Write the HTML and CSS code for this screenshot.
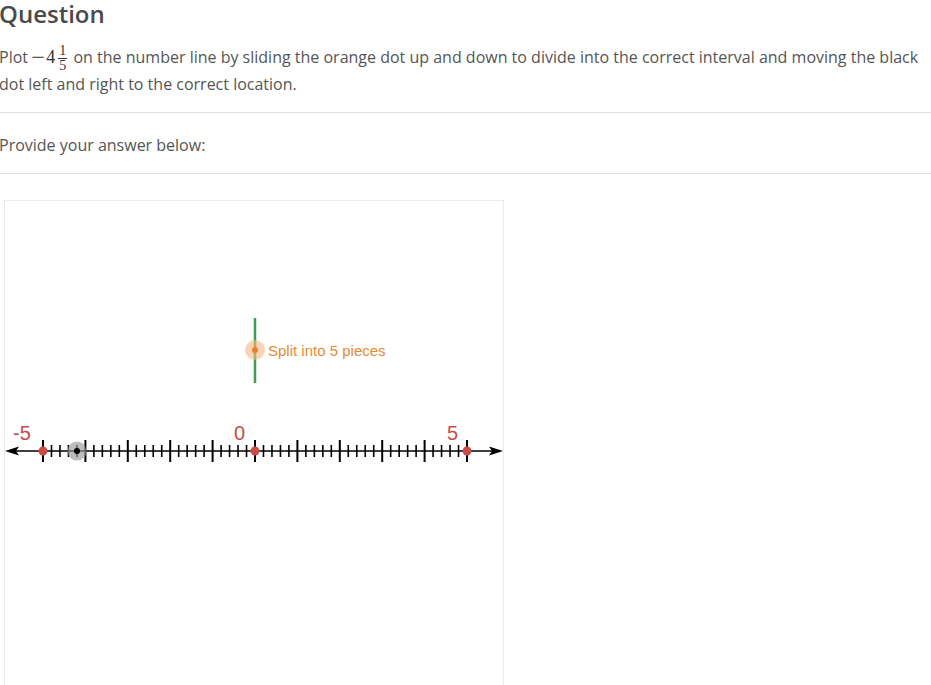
FILE: index.html
```html
<!DOCTYPE html>
<html>
<head>
    <title>Question</title>
    <link rel="stylesheet" href="styles.css">
</head>
<body>
    <div class="page">
        <h2 class="title">Question</h2>
        <p class="prompt">Plot <span class="math"><span class="minus">&minus;</span>4<span class="frac"><span class="num">1</span><span class="den">5</span></span></span> on the number line by sliding the orange dot up and down to divide into the correct interval and moving the black dot left and right to the correct location.</p>
        <hr class="rule">
        <p class="provide">Provide your answer below:</p>
        <hr class="rule">

        <div class="board">
            <svg id="plot" class="plot" width="498" height="520" viewBox="5 201 498 520">
                <!-- split slider -->
                <line x1="255" y1="318" x2="255" y2="383" stroke="#3f9a52" stroke-width="2.5"/>
                <circle cx="255" cy="350" r="10" fill="#f6b886" fill-opacity="0.6"/>
                <circle cx="255" cy="350" r="3" fill="#ec7f2a"/>
                <text class="split-label" x="268" y="356">Split into 5 pieces</text>

                <!-- axis -->
                <line x1="12" y1="451" x2="496" y2="451" stroke="#000" stroke-width="1.5"/>
                <polygon points="5,451 19,446.5 16,451 19,455.5" fill="#000"/>
                <polygon points="503,451 489,446.5 492,451 489,455.5" fill="#000"/>
                <g id="ticks"></g>

                <text class="axis-label" x="13" y="440">-5</text>
                <text class="axis-label" x="234" y="440">0</text>
                <text class="axis-label" x="447" y="440">5</text>

                <circle cx="43" cy="451" r="4.5" fill="#cc4b47"/>
                <circle cx="255" cy="451" r="4.5" fill="#cc4b47"/>
                <circle cx="467" cy="451" r="4.5" fill="#cc4b47"/>

                <!-- answer point -->
                <circle cx="77" cy="451" r="9.5" fill="#9a9a9a" fill-opacity="0.65"/>
                <circle cx="77" cy="451" r="3" fill="#000"/>
            </svg>
        </div>
    </div>

    <script>
        const ticks = document.getElementById('ticks');
        const ns = 'http://www.w3.org/2000/svg';
        for (let i = -25; i <= 25; i++) {
            const x = 255 + i * 8.48;
            const major = i % 5 === 0;
            const line = document.createElementNS(ns, 'line');
            line.setAttribute('x1', x);
            line.setAttribute('x2', x);
            line.setAttribute('y1', major ? 440 : 445);
            line.setAttribute('y2', major ? 462 : 457);
            line.setAttribute('stroke', '#000');
            line.setAttribute('stroke-width', major ? 2 : 1.6);
            ticks.appendChild(line);
        }
    </script>
</body>
</html>
```

FILE: styles.css
```css
body {
    margin: 0;
    background-color: #fff;
    font-family: 'Open Sans', sans-serif;
    color: #555;
}

.page {
    margin-left: -1px;
}

.title {
    margin: 0;
    font-size: 24px;
    line-height: 28px;
    font-weight: 600;
    color: #4a4a4a;
}

.prompt {
    margin: 16px 0 14px;
    font-size: 16px;
    line-height: 27px;
}

.math {
    font-family: 'Liberation Serif', serif;
    font-size: 18px;
    color: #333;
    margin-right: 2px;
    margin-left: 1px;
}

.minus {
    display: inline-block;
    transform: scaleX(1.35);
    margin-right: 3px;
}

.frac {
    display: inline-flex;
    flex-direction: column;
    align-items: center;
    vertical-align: middle;
    font-size: 14px;
    line-height: 12px;
    margin: -6px 0 -6px 3px;
}

.frac .num {
    border-bottom: 1px solid #333;
    padding: 0 1px 1px;
}

.frac .den {
    padding-top: 1px;
}

.rule {
    border: 0;
    border-top: 1px solid #ddd;
    margin: 0;
}

.provide {
    margin: 19px 0 14px;
    font-size: 16px;
    line-height: 27px;
}

.board {
    margin: 26px 0 0 5px;
    width: 498px;
    height: 520px;
    border: 1px solid #ececec;
    background-color: #fff;
}

.plot {
    display: block;
}

.split-label {
    font-family: 'Liberation Sans', sans-serif;
    font-size: 15px;
    fill: #e88a32;
}

.axis-label {
    font-family: 'Liberation Sans', sans-serif;
    font-size: 20px;
    fill: #c94c48;
}
```
